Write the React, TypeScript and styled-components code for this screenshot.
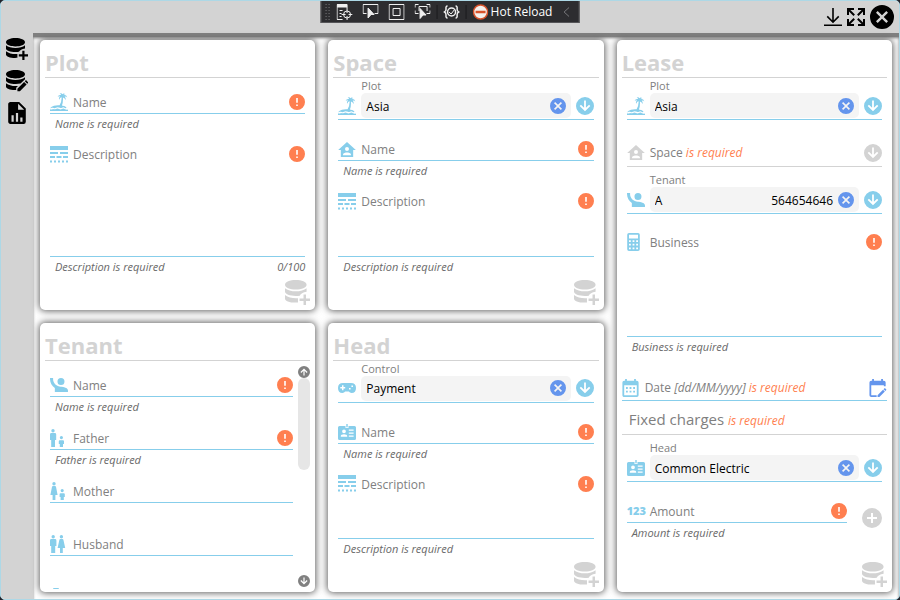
import React, { useId } from 'react';
import styled, { createGlobalStyle, css } from 'styled-components';

const sky = '#87ceeb';
const coral = '#ff7f50';
const blue = '#6495ed';
const silver = '#d3d3d3';
const gray = '#808080';

const GlobalStyle = createGlobalStyle`
  * { box-sizing: border-box; }
  body {
    margin: 0;
    background: #23232b;
    font-family: "Open Sans", "Noto Sans", sans-serif;
    font-size: 12px;
    line-height: 16px;
    color: ${gray};
  }
  button, input, select, textarea { font: inherit; color: #000; }
`;

/* ---------- icons ---------- */

const CIRCLE = 'M12,2A10,10 0 0,0 2,12A10,10 0 0,0 12,22A10,10 0 0,0 22,12A10,10 0 0,0 12,2Z';

type IconDef = { box: string; d: string; w: number; h: number };

const icons = {
  alert: { box: '2 2 20 20', w: 16, h: 16, d: 'M13,13H11V7H13M13,17H11V15H13' + CIRCLE },
  clear: { box: '2 2 20 20', w: 16, h: 16, d: CIRCLE + 'M15.59,7L12,10.59L8.41,7L7,8.41L10.59,12L7,15.59L8.41,17L12,13.41L15.59,17L17,15.59L13.41,12L17,8.41L15.59,7Z' },
  close: { box: '2 2 20 20', w: 24, h: 24, d: CIRCLE + 'M15.59,7L12,10.59L8.41,7L7,8.41L10.59,12L7,15.59L8.41,17L12,13.41L15.59,17L17,15.59L13.41,12L17,8.41L15.59,7Z' },
  down: { box: '2 2 20 20', w: 18, h: 18, d: CIRCLE + 'M11,6V14L7.5,10.5L6.08,11.92L12,17.84L17.92,11.92L16.5,10.5L13,14V6H11Z' },
  scrollDown: { box: '2 2 20 20', w: 12, h: 12, d: CIRCLE + 'M11,6V14L7.5,10.5L6.08,11.92L12,17.84L17.92,11.92L16.5,10.5L13,14V6H11Z' },
  scrollUp: { box: '2 2 20 20', w: 12, h: 12, d: CIRCLE + 'M11,18V10L7.5,13.5L6.08,12.08L12,6.16L17.92,12.08L16.5,13.5L13,10V18H11Z' },
  plus: { box: '2 2 20 20', w: 20, h: 20, d: CIRCLE + 'M17,13H13V17H11V13H7V11H11V7H13V11H17Z' },
  home: { box: '2 3 20 17', w: 18, h: 15, d: 'M12,3L2,12H5V20H19V12H22L12,3M12,8.75A2.25,2.25 0 0,1 14.25,11A2.25,2.25 0 0,1 12,13.25A2.25,2.25 0 0,1 9.75,11A2.25,2.25 0 0,1 12,8.75M12,15C13.5,15 16.5,15.75 16.5,17.25V18H7.5V17.25C7.5,15.75 10.5,15 12,15Z' },
  person: { box: '1.5 4 20.5 16', w: 18, h: 14, d: 'M1.5,4V5.5C1.5,9.65 3.71,13.28 7,15.3V20H22V18C22,15.34 16.67,14 14,14C9,14 5,10 5,5.5V4M14,4A4,4 0 0,0 10,8A4,4 0 0,0 14,12A4,4 0 0,0 18,8A4,4 0 0,0 14,4Z' },
  father: { box: '0 0 18 18', w: 18, h: 18, d: 'M3 0A1.7 1.7 0 0 1 3 3.4A1.7 1.7 0 0 1 3 0M1.4 4H4.8Q6.2 4 6.2 5.4V11H5V18H1.2V11H0V5.4Q0 4 1.4 4ZM11.4 7A1.6 1.6 0 0 1 11.4 10.2A1.6 1.6 0 0 1 11.4 7M9.8 11.2H13Q14 11.2 14 12.2V15H13V18H9.8V15H8.8V12.2Q8.8 11.2 9.8 11.2Z' },
  mother: { box: '0 0 18 18', w: 18, h: 18, d: 'M4 0A1.7 1.7 0 0 1 4 3.4A1.7 1.7 0 0 1 4 0M3 4H5Q5.8 4 6 4.8L7.6 13H5.4V18H2.6V13H.4L2 4.8Q2.2 4 3 4ZM12.2 7A1.6 1.6 0 0 1 12.2 10.2A1.6 1.6 0 0 1 12.2 7M10.6 11.2H13.8Q14.8 11.2 14.8 12.2V15H13.8V18H10.6V15H9.6V12.2Q9.6 11.2 10.6 11.2Z' },
  couple: { box: '0 0 18 18', w: 18, h: 18, d: 'M3.2 0A1.7 1.7 0 0 1 3.2 3.4A1.7 1.7 0 0 1 3.2 0M1.4 4H5Q6.4 4 6.4 5.4V11H5.2V18H1.2V11H0V5.4Q0 4 1.4 4ZM11.4 0A1.7 1.7 0 0 1 11.4 3.4A1.7 1.7 0 0 1 11.4 0M10.4 4H12.4Q13.2 4 13.4 4.8L15.2 13H12.8V18H10V13H7.6L9.4 4.8Q9.6 4 10.4 4Z' },
  phone: { box: '0 0 18 18', w: 18, h: 18, d: 'M4 0H8Q9 0 9 1V17Q9 18 8 18H4Q3 18 3 17V1Q3 0 4 0Z' },
  calculator: { box: '5 2 14 20', w: 13, h: 18, d: 'M7,2H17A2,2 0 0,1 19,4V20A2,2 0 0,1 17,22H7A2,2 0 0,1 5,20V4A2,2 0 0,1 7,2M7,4V8H17V4H7M7,10V12H9V10H7M11,10V12H13V10H11M15,10V12H17V10H15M7,14V16H9V14H7M11,14V16H13V14H11M15,14V16H17V14H15M7,18V20H9V18H7M11,18V20H13V18H11M15,18V20H17V18H15Z' },
  calendar: { box: '3 1 18 20', w: 17, h: 18, d: 'M9,10V12H7V10H9M13,10V12H11V10H13M17,10V12H15V10H17M19,3A2,2 0 0,1 21,5V19A2,2 0 0,1 19,21H5C3.89,21 3,20.1 3,19V5A2,2 0 0,1 5,3H6V1H8V3H16V1H18V3H19M19,19V8H5V19H19M9,14V16H7V14H9M13,14V16H11V14H13M17,14V16H15V14H17Z' },
  calendarEdit: { box: '3 1 19 20', w: 18, h: 18, d: 'M19,3H18V1H16V3H8V1H6V3H5A2,2 0 0,0 3,5V19A2,2 0 0,0 5,21H11V19H5V8H19V9H21V5A2,2 0 0,0 19,3M21.7,13.35L20.7,14.35L18.65,12.35L19.65,11.35C19.85,11.14 20.19,11.13 20.42,11.35L21.7,12.63C21.89,12.83 21.89,13.15 21.7,13.35M12,18.94L18.07,12.88L20.12,14.88L14.06,21H12V18.94Z' },
  expand: { box: '3 3 18 18', w: 18, h: 18, d: 'M9.5,13.09L10.91,14.5L6.41,19H10V21H3V14H5V17.59L9.5,13.09M10.91,9.5L9.5,10.91L5,6.41V10H3V3H10V5H6.41L10.91,9.5M14.5,13.09L19,17.59V14H21V21H14V19H17.59L13.09,14.5L14.5,13.09M13.09,9.5L17.59,5H14V3H21V10H19V6.41L14.5,10.91L13.09,9.5Z' },
  minimize: { box: '0 0 18 18', w: 18, h: 18, d: 'M8.2 0H9.8V12.2L14.2 7.8L15.3 8.9L9 15.2L2.7 8.9L3.8 7.8L8.2 12.2ZM0 16.4H18V18H0Z' },
  fileChart: { box: '4 2 16 20', w: 18, h: 22, d: 'M13,9H18.5L13,3.5V9M6,2H14L20,8V20A2,2 0 0,1 18,22H6C4.89,22 4,21.1 4,20V4C4,2.89 4.89,2 6,2M7,20H9V14H7V20M11,20H13V12H11V20M15,20H17V16H15V20Z' },
  lines: { box: '0 0 18 17', w: 18, h: 17, d: 'M0 0H18V4H0ZM0 6H8V8H0ZM10 6H18V8H10ZM0 10H5V12H0ZM6.5 10H11.5V12H6.5ZM13 10H18V12H13ZM0 14.5H2V16.5H0ZM4 14.5H6V16.5H4ZM8 14.5H10V16.5H8ZM12 14.5H14V16.5H12ZM16 14.5H18V16.5H16Z' },
  pad: { box: '0 0 18 10', w: 18, h: 10, d: 'M5 0H13Q18 0 18 5Q18 10 13.6 10Q11.8 10 10.8 8.6H7.2Q6.2 10 4.4 10Q0 10 0 5Q0 0 5 0ZM4 2.3V4H2.3V5.5H4V7.2H5.5V5.5H7.2V4H5.5V2.3ZM13.4 2.4H15V4H13.4ZM11 5H12.6V6.6H11Z' },
  card: { box: '0 0 18 16', w: 18, h: 16, d: 'M1.5 2H7.5V4H10.5V2H16.5Q18 2 18 3.5V14.5Q18 16 16.5 16H1.5Q0 16 0 14.5V3.5Q0 2 1.5 2ZM8.3 0H9.7V3.2H8.3ZM6 5.4A1.9 1.9 0 0 0 6 9.2A1.9 1.9 0 0 0 6 5.4M2.8 12.8H9.2V12Q9.2 10.2 6 10.2Q2.8 10.2 2.8 12ZM10.8 5.6V6.8H15.6V5.6ZM10.8 8.6V9.8H15.6V8.6ZM10.8 11.6V12.8H15.6V11.6Z' },
  island: { box: '0 0 18 18', w: 18, h: 18, d: 'M0 15.2Q1.5 13.2 4 12.7Q7 12 9.6 12.3Q11.8 8.3 11.6 4.3Q9.6 4.2 9.4 6.8Q8.2 4.8 10 3.4Q8.8 3 7.6 4Q8.4 1.6 11 2.1Q11 .8 9.6 .5Q11.6 -.4 12.4 1.2Q13.6 -.2 15.4 1.2Q13.8 1.1 13.5 2.2Q16.2 1.4 17.3 4.4Q15.8 3.3 14.6 3.7Q16.2 5 15.4 7Q14.8 4.8 12.9 4.4Q13.3 9 11.9 12.5Q15.6 13 16.6 14.8Q15.4 15.5 14.5 14.8Q13.4 13.9 12 14.7Q10.6 15.5 9 14.6Q7.5 13.8 6 14.7Q4.5 15.5 3 14.8Q1.5 14.6 0 15.2ZM0 16.2Q1.5 16.8 3 15.9Q4.5 16.8 6 15.9Q7.5 15 9 16Q10.5 16.8 12 15.9Q13.5 15.2 15 16.2Q16.5 17 18 16.4V18H0Z' },
  dbPlus: { box: '0 0 22 22', w: 22, h: 22, d: 'M9.5 0C14.7 0 19 1.8 19 4.2S14.7 8.4 9.5 8.4S0 6.6 0 4.2S4.3 0 9.5 0ZM0 7.2C4 10.8 15 10.8 19 7.2V10.4Q14.2 11.2 13 13.8C6 14.6 0 12.8 0 10.4ZM0 13.2C3 15.5 7 16.3 11.4 16V19.8C5 20.3 0 18.6 0 16.4ZM16.3 12.8H18.5V16.3H22V18.5H18.5V22H16.3V18.5H12.8V16.3H16.3Z' },
  dbEdit: { box: '0 0 22 22', w: 22, h: 22, d: 'M9.5 0C14.7 0 19 1.8 19 4.2S14.7 8.4 9.5 8.4S0 6.6 0 4.2S4.3 0 9.5 0ZM0 7.2C4 10.8 15 10.8 19 7.2V9.2L14.6 13.5C7 14.8 0 12.8 0 10.4ZM0 13.2C3 15.5 7 16.3 12 15.9L10.2 17.8V19.9C5 20.3 0 18.6 0 16.4ZM11.4 18.7L18.1 12L20.6 14.5L13.9 21.2H11.4ZM18.8 11.3L20 10.1L22.4 12.6L21.2 13.8Z' },
} satisfies Record<string, IconDef>;

type IconName = keyof typeof icons;

const Svg = styled.svg<{ $color: string }>`
  display: block;
  flex: none;
  fill: ${(p) => p.$color};
`;

function Icon({ name, color = sky, scale = 1 }: { name: IconName; color?: string; scale?: number }) {
  const i: IconDef = icons[name];
  return (
    <Svg $color={color} viewBox={i.box} width={i.w * scale} height={i.h * scale} aria-hidden="true">
      <path fillRule="evenodd" d={i.d} />
    </Svg>
  );
}

/* ---------- frame ---------- */

const Window = styled.div`
  position: relative;
  display: flex;
  flex-direction: column;
  height: 100vh;
  overflow: hidden;
  background: #fff;
  border: 1px solid #add8e6;
  border-radius: 5px;
`;

const TitleBar = styled.header`
  display: flex;
  flex: none;
  align-items: center;
  justify-content: flex-end;
  gap: 5px;
  height: 32px;
  padding-right: 5px;
  background: ${silver};
`;

const IconButton = styled.button`
  display: flex;
  flex: none;
  align-items: center;
  justify-content: center;
  padding: 0;
  border: 0;
  background: none;
`;

const Body = styled.div`
  display: flex;
  flex: 1;
  min-height: 0;
`;

const SideBar = styled.nav`
  display: flex;
  flex: none;
  flex-direction: column;
  align-items: center;
  gap: 10px;
  width: 32px;
  padding-top: 5px;
  background: ${silver};
`;

const Board = styled.main`
  flex: 1;
  display: grid;
  grid-template-columns: repeat(3, minmax(0, 1fr));
  grid-template-rows: repeat(2, minmax(240px, 1fr));
  gap: 13px;
  padding: 7px;
  box-shadow: inset 0 4px 0 ${gray}, inset 0 5px 3px ${gray};
`;

const Card = styled.section<{ $tall?: boolean }>`
  display: flex;
  flex-direction: column;
  min-height: 0;
  padding: 0 5px 5px;
  background: #fff;
  border-radius: 5px;
  box-shadow: 0 0 7px 1px #606060;
  ${(p) => p.$tall && css`grid-area: 1 / 3 / 3 / 4;`}
`;

const CardTitle = styled.h2`
  flex: none;
  height: 38px;
  margin: 0;
  padding-top: 8px;
  border-bottom: 1px solid ${silver};
  font-size: 22px;
  line-height: 29px;
  font-weight: 700;
  color: ${silver};
`;

const Fields = styled.div`
  display: flex;
  flex: 1;
  flex-direction: column;
  min-width: 0;
  min-height: 0;
  padding: 0 5px;
`;

const CardFooter = styled.footer`
  display: flex;
  flex: none;
  justify-content: flex-end;
  padding-top: 4px;
`;

/* ---------- tool strip ---------- */

const ToolStrip = styled.div`
  position: absolute;
  top: -1px;
  left: 50%;
  transform: translateX(-50%);
  display: flex;
  align-items: center;
  height: 23px;
  padding-right: 3px;
  background: #2d2d30;
  border: 1px solid #555558;
  color: #fff;
`;

const StripButton = styled.button`
  display: flex;
  align-items: center;
  gap: 2px;
  padding: 0 5px;
  border: 0;
  background: none;
  color: #fff;
`;

const StripRule = styled.span`
  width: 1px;
  height: 14px;
  margin: 0 1px;
  background: #1b1b1d;
`;

const Grip = styled.span`
  width: 6px;
  height: 17px;
  margin: 0 1px 0 3px;
  background: radial-gradient(circle, #77777a 0 1px, transparent 1px) 0 0 / 3px 3px;
`;

const Line = styled.svg`
  display: block;
  fill: none;
  stroke: #f0f0f0;
`;

function Tools() {
  return (
    <ToolStrip role="toolbar">
      <Grip />
      <StripButton aria-label="Live tree">
        <Line width="16" height="16" viewBox="0 0 16 16">
          <path d="M.5 .5H10.5V3H.5Z" fill="#f0f0f0" />
          <path d="M.5 3V15.5H6M3 6.5H6M3 9.5H5M3 12.5H5M10.5 3V5" />
          <circle cx="10.5" cy="10.5" r="3.5" />
          <path d="M10.5 5V9M10.5 12V16M5 10.5H9M12 10.5H16" />
        </Line>
      </StripButton>
      <StripButton aria-label="Select element">
        <Line width="16" height="16" viewBox="0 0 16 16">
          <path d="M4 9.5H.5V.5H15.5V9.5H12" />
          <path d="M5.5 4L11.5 10.5H8.5L5.5 14Z" fill="#f0f0f0" />
        </Line>
      </StripButton>
      <StripButton aria-label="Layout adorners">
        <Line width="16" height="16" viewBox="0 0 16 16">
          <path d="M.5 .5H15.5V15.5H.5ZM4.5 4.5H11.5V11.5H4.5Z" />
        </Line>
      </StripButton>
      <StripButton aria-label="Track focus">
        <Line width="16" height="16" viewBox="0 0 16 16">
          <path d="M.5 3.5V.5H4M12 .5H15.5V3.5M.5 6.5V9.5H4M15.5 6.5V9.5H12M4.5 7V2.5H12.5V7" />
          <path d="M5.5 4.5L11.5 11H8.5L5.5 14.5Z" fill="#f0f0f0" />
        </Line>
      </StripButton>
      <StripRule />
      <StripButton aria-label="Binding failures">
        <Line width="16" height="14" viewBox="0 0 16 14">
          <path d="M4 1Q2 1 2.5 4Q2.5 6.5 .8 7Q2.5 7.5 2.5 10Q2 13 4 13M12 1Q14 1 13.5 4Q13.5 6.5 15.2 7Q13.5 7.5 13.5 10Q14 13 12 13" strokeWidth="1.5" />
          <circle cx="8" cy="7" r="4" strokeWidth="1.5" />
          <path d="M5.5 7L7.5 9L11 4.5" />
        </Line>
      </StripButton>
      <StripRule />
      <StripButton>
        <Line width="16" height="16" viewBox="0 0 16 16">
          <circle cx="8" cy="8" r="7" fill="#f5f1ee" stroke="#d9532c" strokeWidth="1.5" />
          <path d="M3 8H13" stroke="#d9532c" strokeWidth="2.5" />
        </Line>
        Hot Reload
      </StripButton>
      <StripButton aria-label="Collapse">
        <Line width="8" height="10" viewBox="0 0 8 10">
          <path d="M6.5 .5L1.5 5L6.5 9.5" stroke="#77777a" />
        </Line>
      </StripButton>
    </ToolStrip>
  );
}

/* ---------- fields ---------- */

const FieldBox = styled.div<{ $grow?: boolean }>`
  display: flex;
  flex: ${(p) => (p.$grow ? '1 1 0' : 'none')};
  flex-direction: column;
  height: ${(p) => (p.$grow ? 'auto' : '53px')};
  padding-top: ${(p) => (p.$grow ? '13px' : '14px')};
`;

const InputRow = styled.div<{ $grow?: boolean }>`
  display: flex;
  flex: ${(p) => (p.$grow ? 1 : 'none')};
  align-items: flex-start;
  height: ${(p) => (p.$grow ? 'auto' : '22px')};
  border-bottom: 1px solid ${sky};
`;

const IconSlot = styled.span`
  display: flex;
  flex: none;
  align-items: center;
  width: 23px;
  height: 20px;
`;

const Numerals = styled.span`
  color: ${sky};
  font-size: 11px;
  font-weight: 800;
`;

const Label = styled.label`
  flex: none;
  line-height: 21px;
`;

const bare = css`
  flex: 1;
  min-width: 0;
  padding: 0 5px;
  border: 0;
  outline: 0;
  background: none;
`;

const TextInput = styled.input`${bare} height: 20px;`;
const TextArea = styled.textarea`${bare} align-self: stretch; resize: none;`;

const AlertSlot = styled.span`
  display: flex;
  flex: none;
  align-items: center;
  height: 20px;
`;

const Helper = styled.div<{ $grow?: boolean }>`
  display: flex;
  flex: none;
  justify-content: space-between;
  height: ${(p) => (p.$grow ? '19px' : '17px')};
  padding: 2px 0 0 5px;
  font-size: 11px;
  font-style: italic;
  color: #696969;
`;

const Required = styled.em`
  color: ${coral};
  font-size: 12px;
`;

type FieldProps = {
  label: string;
  icon?: IconName;
  helper?: string;
  alert?: boolean;
  multiline?: boolean;
  counter?: string;
};

function Field({ label, icon, helper, alert, multiline, counter }: FieldProps) {
  const id = useId();
  return (
    <FieldBox $grow={multiline}>
      <InputRow $grow={multiline}>
        <IconSlot>{icon ? <Icon name={icon} /> : <Numerals>123</Numerals>}</IconSlot>
        <Label htmlFor={id}>{label}</Label>
        {multiline ? <TextArea id={id} /> : <TextInput id={id} />}
        {alert && (
          <AlertSlot>
            <Icon name="alert" color={coral} />
          </AlertSlot>
        )}
      </InputRow>
      <Helper $grow={multiline}>
        <span>{helper}</span>
        {counter && <output htmlFor={id}>{counter}</output>}
      </Helper>
    </FieldBox>
  );
}

const PickerBox = styled.div<{ $off?: boolean }>`
  display: flex;
  flex: none;
  flex-direction: column;
  height: 42px;
  margin-bottom: 5px;
  border-bottom: 1px solid ${(p) => (p.$off ? silver : sky)};
`;

const PickerLabel = styled.label`
  height: 15px;
  padding-left: 23px;
  font-size: 11px;
  line-height: 15px;
`;

const PickerRow = styled.div<{ $off?: boolean }>`
  display: flex;
  align-items: center;
  height: 25px;
  margin-top: ${(p) => (p.$off ? '15px' : 0)};
`;

const PickerValue = styled.div`
  display: flex;
  flex: 1;
  align-items: center;
  gap: 5px;
  min-width: 0;
  height: 25px;
  margin-right: 5px;
  padding: 0 5px;
  border-radius: 5px;
  background: #f4f4f4;
  color: #000;
`;

const Select = styled.select`
  flex: 1;
  min-width: 0;
  padding: 2px 0 0;
  border: 0;
  outline: 0;
  appearance: none;
  background: none;
  opacity: 1;
`;

const Detail = styled.span`
  padding-top: 2px;
`;

type PickerProps = { label: string; icon: IconName; value?: string; detail?: string };

function Picker({ label, icon, value, detail }: PickerProps) {
  const id = useId();
  if (!value) {
    return (
      <PickerBox $off>
        <PickerRow $off>
          <IconSlot>
            <Icon name={icon} color={silver} />
          </IconSlot>
          <Label htmlFor={id}>
            {label} <Required>is required</Required>
          </Label>
          <Select id={id} disabled />
          <IconButton aria-label={'Open ' + label} disabled>
            <Icon name="down" color={silver} />
          </IconButton>
        </PickerRow>
      </PickerBox>
    );
  }
  return (
    <PickerBox>
      <PickerLabel htmlFor={id}>{label}</PickerLabel>
      <PickerRow>
        <IconSlot>
          <Icon name={icon} />
        </IconSlot>
        <PickerValue>
          <Select id={id}>
            <option>{value}</option>
          </Select>
          {detail && <Detail>{detail}</Detail>}
          <IconButton aria-label={'Clear ' + label}>
            <Icon name="clear" color={blue} />
          </IconButton>
        </PickerValue>
        <IconButton aria-label={'Open ' + label}>
          <Icon name="down" />
        </IconButton>
      </PickerRow>
    </PickerBox>
  );
}

/* ---------- lease parts ---------- */

const DateRow = styled.div`
  display: flex;
  flex: none;
  align-items: center;
  gap: 6px;
  height: 26px;
  margin-top: 19px;
  border-bottom: 1px solid ${sky};
`;

const SectionTitle = styled.h3`
  flex: none;
  height: 34px;
  margin: 0 0 5px;
  padding: 7px 0 0 7px;
  border-bottom: 1px solid ${silver};
  font-size: 15px;
  line-height: 22px;
  font-weight: 400;
`;

const ChargeRow = styled.div`
  display: flex;
  align-items: center;
  gap: 15px;
`;

const ChargeField = styled.div`
  flex: 1;
  min-width: 0;
`;

const AddButton = styled(IconButton)`
  margin-top: 8px;
`;

const LeaseTop = styled(Fields)`flex: 1 1 0;`;
const LeaseCharges = styled(Fields)`flex: 0 0 118px;`;

/* ---------- tenant scroller ---------- */

const Scroller = styled.div`
  display: flex;
  flex: 1 1 0;
  min-height: 0;
  margin-bottom: -2px;
`;

const ScrollView = styled(Fields)`
  overflow: hidden;
`;

const ScrollBar = styled.div`
  display: flex;
  flex: none;
  flex-direction: column;
  width: 12px;
  padding: 5px 0 2px;
`;

const ScrollTrack = styled.div`
  flex: 1;
`;

const ScrollThumb = styled.div`
  height: 47%;
  border-radius: 6px;
  background: #e6e6e6;
`;

function SaveFooter() {
  return (
    <CardFooter>
      <IconButton aria-label="Save">
        <Icon name="dbPlus" color={silver} scale={25 / 22} />
      </IconButton>
    </CardFooter>
  );
}

export default function App() {
  const dateId = useId();
  return (
    <>
      <GlobalStyle />
      <Window>
        <TitleBar>
          <IconButton aria-label="Minimize"><Icon name="minimize" color="#000" /></IconButton>
          <IconButton aria-label="Maximize"><Icon name="expand" color="#000" /></IconButton>
          <IconButton aria-label="Close"><Icon name="close" color="#000" /></IconButton>
        </TitleBar>
        <Body>
          <SideBar>
            <IconButton aria-label="Add records"><Icon name="dbPlus" color="#000" /></IconButton>
            <IconButton aria-label="Edit records"><Icon name="dbEdit" color="#000" /></IconButton>
            <IconButton aria-label="Reports"><Icon name="fileChart" color="#000" /></IconButton>
          </SideBar>
          <Board>
            <Card>
              <CardTitle>Plot</CardTitle>
              <Fields>
                <Field label="Name" icon="island" helper="Name is required" alert />
                <Field label="Description" icon="lines" helper="Description is required" counter="0/100" alert multiline />
              </Fields>
              <SaveFooter />
            </Card>

            <Card>
              <CardTitle>Space</CardTitle>
              <Fields>
                <Picker label="Plot" icon="island" value="Asia" />
                <Field label="Name" icon="home" helper="Name is required" alert />
                <Field label="Description" icon="lines" helper="Description is required" alert multiline />
              </Fields>
              <SaveFooter />
            </Card>

            <Card $tall>
              <CardTitle>Lease</CardTitle>
              <LeaseTop>
                <Picker label="Plot" icon="island" value="Asia" />
                <Picker label="Space" icon="home" />
                <Picker label="Tenant" icon="person" value="A" detail="564654646" />
                <Field label="Business" icon="calculator" helper="Business is required" alert multiline />
              </LeaseTop>
              <DateRow>
                <Icon name="calendar" />
                <Label htmlFor={dateId}>
                  Date <em>[dd/MM/yyyy]</em> <Required>is required</Required>
                </Label>
                <TextInput id={dateId} />
                <IconButton aria-label="Pick date"><Icon name="calendarEdit" color={blue} /></IconButton>
              </DateRow>
              <SectionTitle>
                Fixed charges <Required>is required</Required>
              </SectionTitle>
              <LeaseCharges>
                <Picker label="Head" icon="card" value="Common Electric" />
                <ChargeRow>
                  <ChargeField>
                    <Field label="Amount" helper="Amount is required" alert />
                  </ChargeField>
                  <AddButton aria-label="Add charge"><Icon name="plus" color={silver} /></AddButton>
                </ChargeRow>
              </LeaseCharges>
              <SaveFooter />
            </Card>

            <Card>
              <CardTitle>Tenant</CardTitle>
              <Scroller>
                <ScrollView>
                  <Field label="Name" icon="person" helper="Name is required" alert />
                  <Field label="Father" icon="father" helper="Father is required" alert />
                  <Field label="Mother" icon="mother" />
                  <Field label="Husband" icon="couple" />
                  <Field label="" icon="phone" alert />
                </ScrollView>
                <ScrollBar>
                  <IconButton aria-label="Scroll up"><Icon name="scrollUp" color={gray} /></IconButton>
                  <ScrollTrack><ScrollThumb /></ScrollTrack>
                  <IconButton aria-label="Scroll down"><Icon name="scrollDown" color={gray} /></IconButton>
                </ScrollBar>
              </Scroller>
            </Card>

            <Card>
              <CardTitle>Head</CardTitle>
              <Fields>
                <Picker label="Control" icon="pad" value="Payment" />
                <Field label="Name" icon="card" helper="Name is required" alert />
                <Field label="Description" icon="lines" helper="Description is required" alert multiline />
              </Fields>
              <SaveFooter />
            </Card>
          </Board>
        </Body>
        <Tools />
      </Window>
    </>
  );
}
